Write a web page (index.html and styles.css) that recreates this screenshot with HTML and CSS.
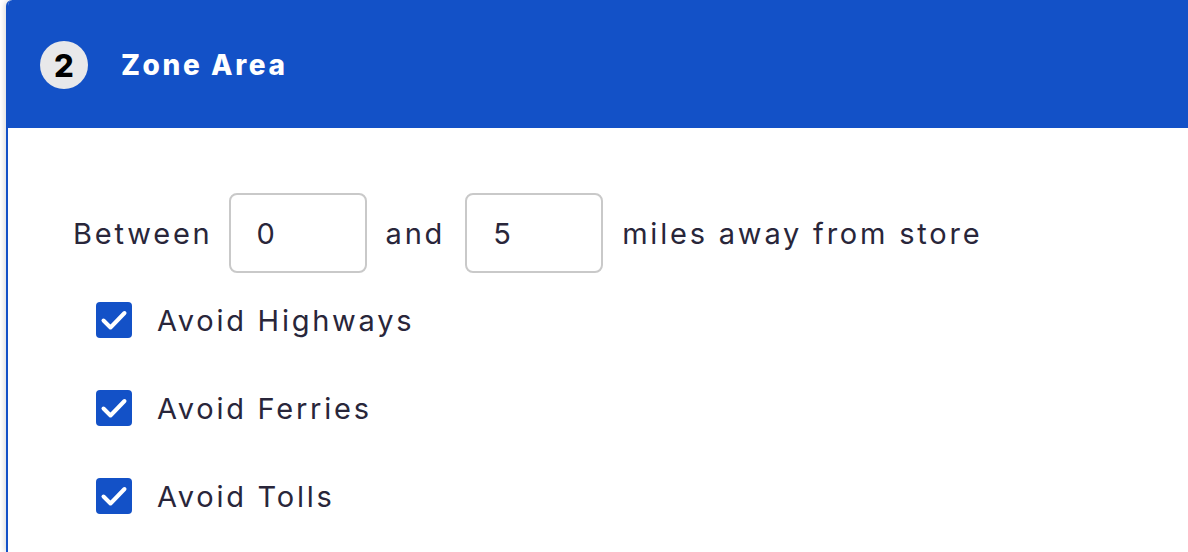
FILE: index.html
```html
<!DOCTYPE html>
<html lang="en">
<head>
<meta charset="utf-8">
<title>Zone Area</title>
<link rel="stylesheet" href="styles.css">
</head>
<body>
<section class="card">
  <header class="card-head">
    <span class="step">2</span>
    <h2 class="title">Zone Area</h2>
  </header>
  <div class="card-body">
    <div class="range-row">
      <span class="lbl">Between</span>
      <input class="num" type="text" value="0">
      <span class="lbl lbl-mid">and</span>
      <input class="num" type="text" value="5">
      <span class="lbl">miles away from store</span>
    </div>
    <ul class="options">
      <li class="opt">
        <span class="box"><svg viewBox="0 0 36 36" width="36" height="36"><polyline points="7.5,18.5 14.5,25.5 28.5,11" fill="none" stroke="#fff" stroke-width="4" stroke-linecap="round" stroke-linejoin="round"/></svg></span>
        <span class="opt-label">Avoid Highways</span>
      </li>
      <li class="opt">
        <span class="box"><svg viewBox="0 0 36 36" width="36" height="36"><polyline points="7.5,18.5 14.5,25.5 28.5,11" fill="none" stroke="#fff" stroke-width="4" stroke-linecap="round" stroke-linejoin="round"/></svg></span>
        <span class="opt-label">Avoid Ferries</span>
      </li>
      <li class="opt">
        <span class="box"><svg viewBox="0 0 36 36" width="36" height="36"><polyline points="7.5,18.5 14.5,25.5 28.5,11" fill="none" stroke="#fff" stroke-width="4" stroke-linecap="round" stroke-linejoin="round"/></svg></span>
        <span class="opt-label">Avoid Tolls</span>
      </li>
    </ul>
  </div>
</section>
</body>
</html>
```

FILE: styles.css
```css
html, body {
  margin: 0;
  padding: 0;
  background: #ffffff;
  overflow: hidden;
}
body {
  width: 1188px;
  height: 552px;
  font-family: "Inter", "DejaVu Sans", sans-serif;
  color: #29263a;
}
.card {
  margin-left: 6px;
  width: 1220px;
  height: 552px;
  border-left: 2px solid #1351c7;
  border-top-left-radius: 6px;
  box-shadow: -2px 0 5px rgba(0, 0, 0, 0.13);
  background: #fff;
  box-sizing: border-box;
  overflow: hidden;
}
.card-head {
  height: 128px;
  margin-left: -2px;
  background: #1351c7;
  border-top-left-radius: 6px;
  display: flex;
  align-items: center;
  padding-left: 34px;
  box-sizing: border-box;
}
.step {
  width: 48px;
  height: 48px;
  border-radius: 50%;
  background: #e8e8ea;
  color: #000;
  font-weight: 800;
  font-size: 31px;
  display: flex;
  align-items: center;
  justify-content: center;
  margin-top: 2px;
}
.title {
  margin: 2px 0 0 33px;
  color: #fff;
  font-size: 28px;
  font-weight: 800;
  letter-spacing: 2.6px;
}
.card-body {
  padding: 65px 0 0 65px;
}
.range-row {
  display: flex;
  align-items: center;
  gap: 19px;
  font-size: 29px;
  letter-spacing: 2.8px;
}
.lbl {
  margin-right: -3px;
}
.lbl-mid {
  margin-right: 1px;
}
.num {
  width: 138px;
  height: 80px;
  box-sizing: border-box;
  border: 2px solid #c9c9c9;
  border-radius: 8px;
  padding: 0 0 0 26px;
  font: inherit;
  font-size: 29px;
  letter-spacing: 0;
  color: #29263a;
  background: #fff;
  outline: none;
}
.options {
  list-style: none;
  margin: 29px 0 0 23px;
  padding: 0;
  display: flex;
  flex-direction: column;
  gap: 52px;
}
.opt {
  display: flex;
  align-items: center;
  gap: 25px;
  height: 36px;
  font-size: 29px;
  letter-spacing: 2.75px;
}
.box {
  width: 36px;
  height: 36px;
  border-radius: 4px;
  background: #1351c7;
  display: block;
}
.box svg {
  display: block;
}
```
